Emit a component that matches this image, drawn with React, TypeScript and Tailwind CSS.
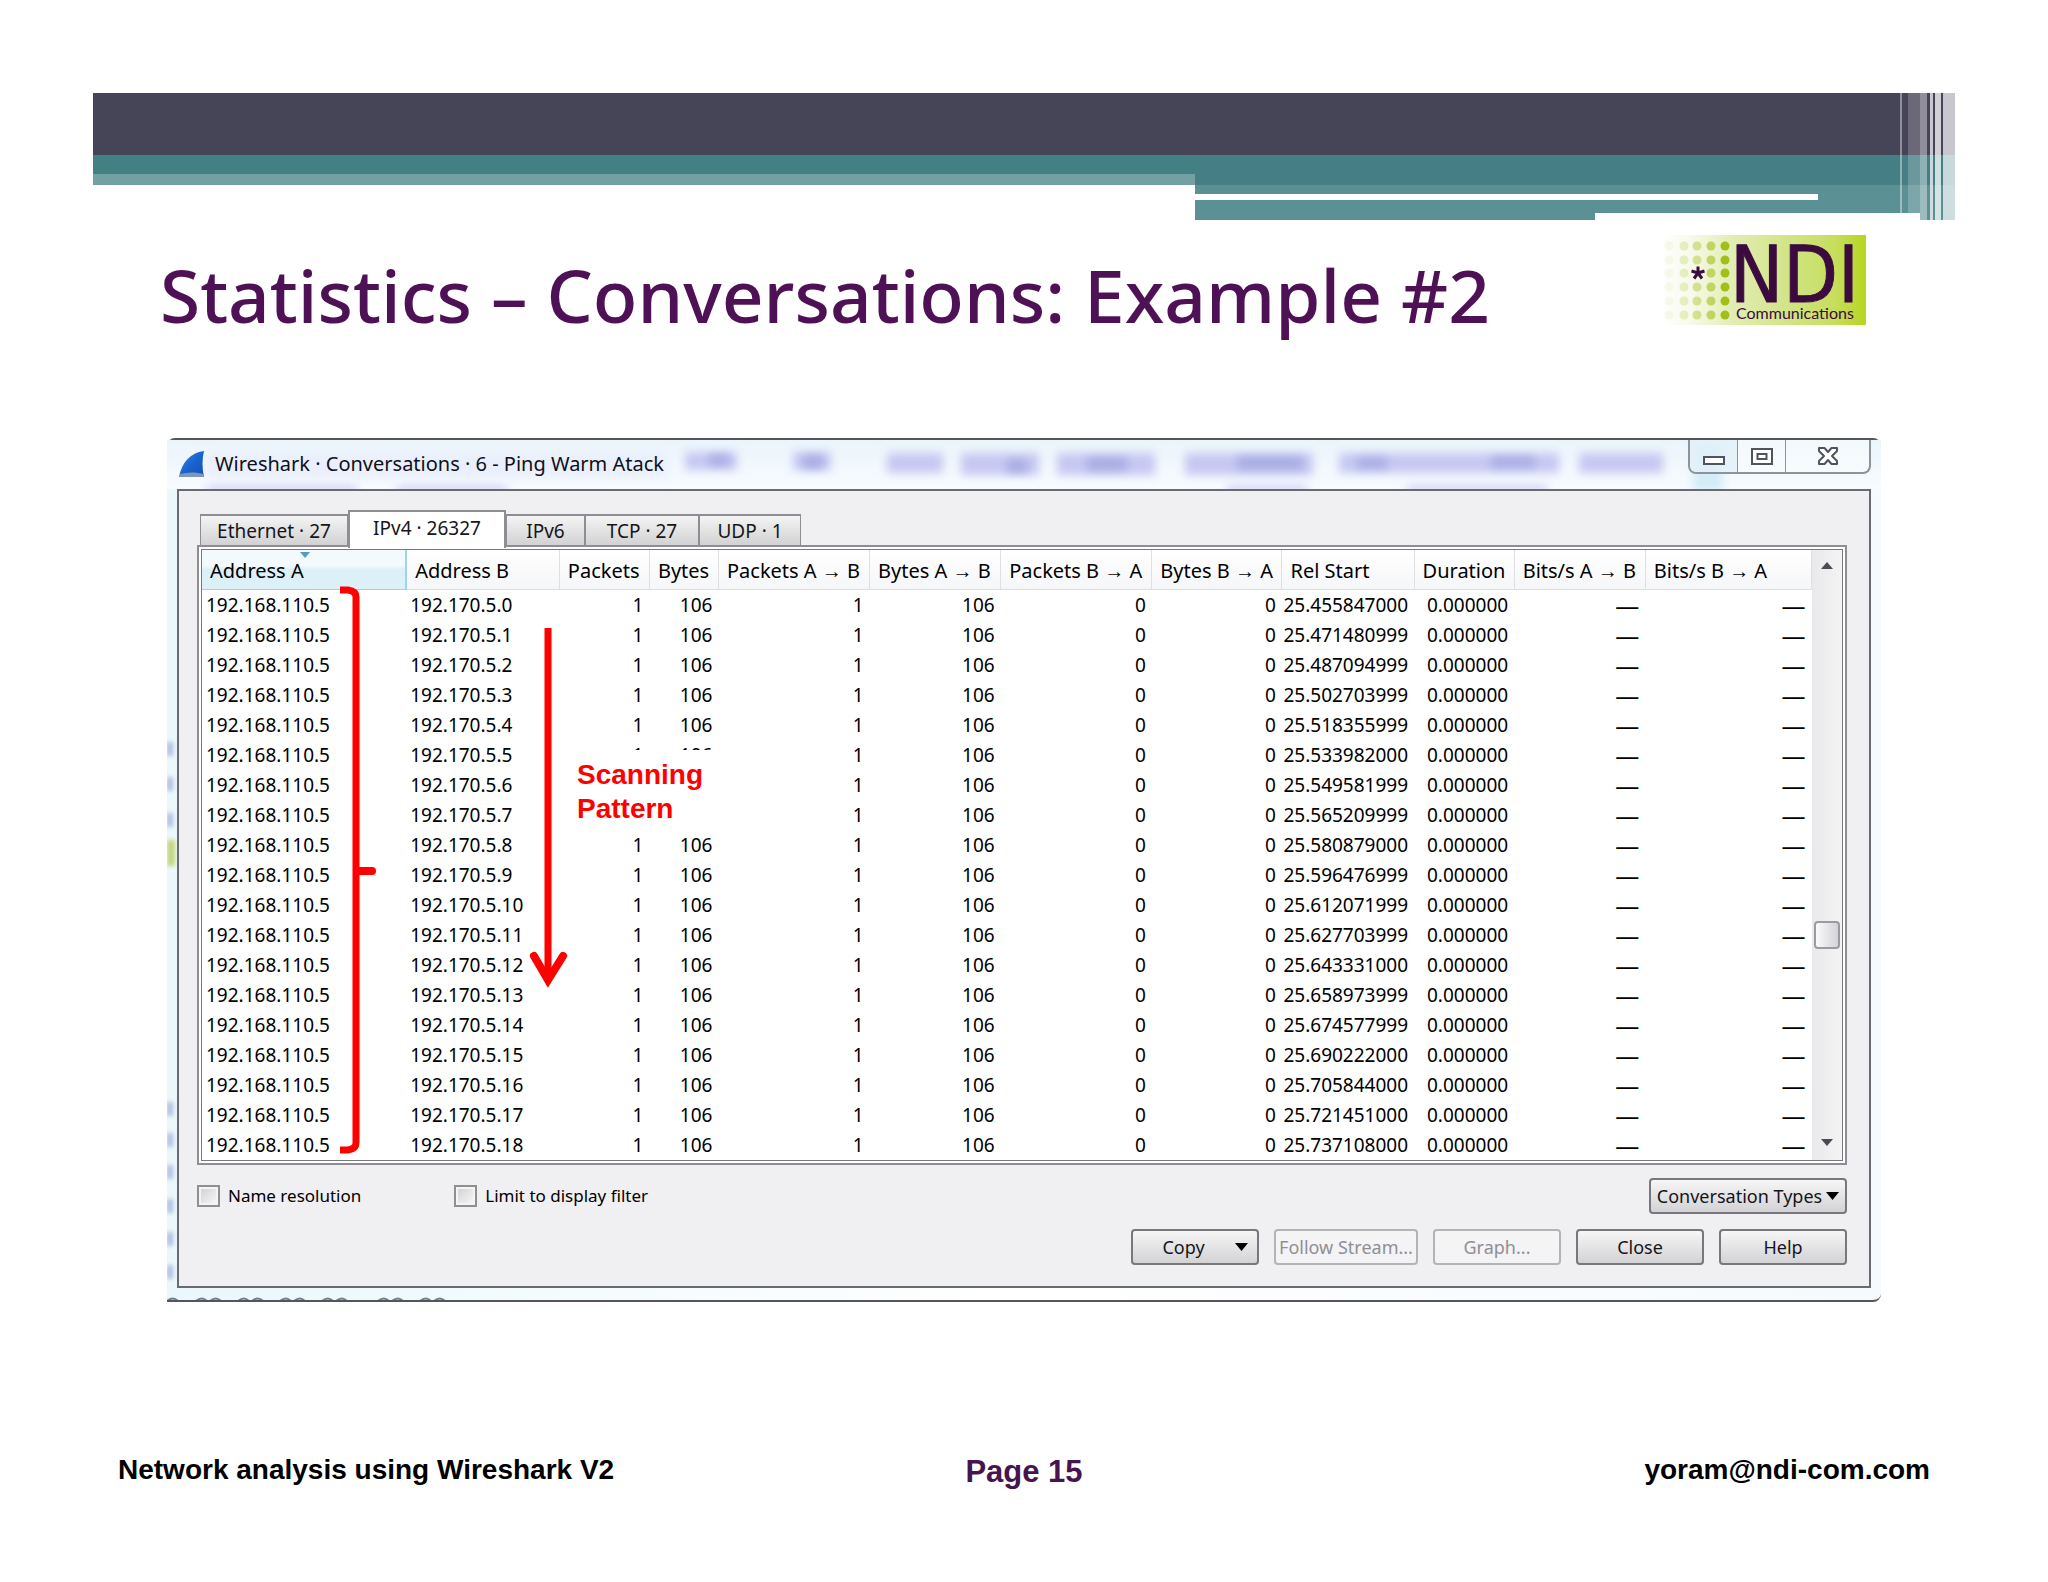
import React from "react";

interface Conversation {
  addressA: string;
  addressB: string;
  packets: string;
  bytes: string;
  relStart: string;
}

const REL_STARTS = [
  "25.455847000",
  "25.471480999",
  "25.487094999",
  "25.502703999",
  "25.518355999",
  "25.533982000",
  "25.549581999",
  "25.565209999",
  "25.580879000",
  "25.596476999",
  "25.612071999",
  "25.627703999",
  "25.643331000",
  "25.658973999",
  "25.674577999",
  "25.690222000",
  "25.705844000",
  "25.721451000",
  "25.737108000",
];

// Rows whose totals sit completely behind the "Scanning Pattern" note
const COVERED_ROWS = [6, 7];

const conversations: Conversation[] = REL_STARTS.map((relStart, i) => ({
  addressA: "192.168.110.5",
  addressB: `192.170.5.${i}`,
  packets: COVERED_ROWS.includes(i) ? "" : "1",
  bytes: COVERED_ROWS.includes(i) ? "" : "106",
  relStart,
}));

const columns = [
  { label: "Address A", width: 204 },
  { label: "Address B", width: 153 },
  { label: "Packets", width: 90 },
  { label: "Bytes", width: 69 },
  { label: "Packets A → B", width: 151 },
  { label: "Bytes A → B", width: 131 },
  { label: "Packets B → A", width: 151 },
  { label: "Bytes B → A", width: 130 },
  { label: "Rel Start", width: 132 },
  { label: "Duration", width: 100 },
  { label: "Bits/s A → B", width: 131 },
  { label: "Bits/s B → A", width: 166 },
];

const tabs = [
  { label: "Ethernet · 27", className: "w-[148px]" },
  { label: "IPv4 · 26327", className: "w-[158px]", selected: true },
  { label: "IPv6", className: "w-[79px]" },
  { label: "TCP · 27", className: "w-[114px]" },
  { label: "UDP · 1", className: "w-[102px]" },
];

const SlideHeader: React.FC = () => (
  <header className="relative mx-[93px]">
    <div className="h-[62px] bg-[#464457]"></div>
    <div className="flex">
      <div className="w-[1102px] shrink">
        <div className="h-[19px] bg-[#438084]"></div>
        <div className="h-[11px] bg-[#72a0a3]"></div>
      </div>
      <div className="flex-1">
        <div className="h-[30px] bg-[#457f85]"></div>
        <div className="h-[9px] bg-[#5b9095]"></div>
        <div className="flex h-[6px] justify-end">
          <div className="w-[137px] bg-[#5b9095]"></div>
        </div>
        <div className="h-[13px] bg-[#5b9095]"></div>
        <div className="flex h-[7px] justify-between">
          <div className="w-[400px] bg-[#5b9095]"></div>
          <div className="w-[35px] bg-[#5b9095]"></div>
        </div>
      </div>
    </div>
    <div className="absolute inset-y-0 right-0 flex">
      <div className="mr-[6px] w-[2px] bg-white/40"></div>
      <div className="w-[12px] bg-white/20"></div>
      <div className="mr-[3px] w-[7px] bg-white/40"></div>
      <div className="mr-[2px] w-[3px] bg-white/70"></div>
      <div className="mr-[2px] w-[6px] bg-white/75"></div>
      <div className="w-[12px] bg-white/70"></div>
    </div>
  </header>
);

const Logo: React.FC = () => {
  const dotColumns = [
    { x: 9, opacity: 0.08 },
    { x: 24, opacity: 0.22 },
    { x: 37, opacity: 0.4 },
    { x: 51, opacity: 0.6 },
    { x: 65, opacity: 1 },
  ];
  const dotRows = [11, 25, 38, 52, 66, 80];

  return (
    <svg
      className="h-[90px] w-[206px] shrink-0 overflow-visible"
      viewBox="0 0 206 90"
      role="img"
      aria-label="NDI Communications"
    >
      <defs>
        <linearGradient id="logo-bg" x1="0" x2="1" y1="0" y2="0">
          <stop offset="0" stopColor="#ffffff" />
          <stop offset="0.15" stopColor="#f7faea" />
          <stop offset="0.35" stopColor="#e2edb4" />
          <stop offset="0.6" stopColor="#d3e58a" />
          <stop offset="0.85" stopColor="#c6de5c" />
          <stop offset="1" stopColor="#b7d521" />
        </linearGradient>
      </defs>
      <rect width="206" height="90" fill="url(#logo-bg)" />
      {dotColumns.map((col) =>
        dotRows
          .filter((y) => !(col.x === 37 && y === 38))
          .map((y) => (
            <circle
              key={`${col.x}-${y}`}
              cx={col.x}
              cy={y}
              r="4.5"
              fill="#a3bf17"
              opacity={col.opacity}
            />
          ))
      )}
      <g stroke="#3b0a3f" strokeWidth="3">
        <path d="M38 38V31.5M38 38L44.5 36M38 38L42 43.5M38 38L34 43.5M38 38L31.5 36" />
      </g>
      <text
        x="70"
        y="67"
        fontSize="79"
        fill="#3b0a3f"
        stroke="#3b0a3f"
        fontFamily="'DejaVu Sans Condensed', 'Noto Sans', sans-serif"
      >
        NDI
      </text>
      <text
        x="76"
        y="84"
        fontSize="16"
        fill="#3b0a3f"
        fontFamily="Lato, sans-serif"
      >
        Communications
      </text>
    </svg>
  );
};

// Packet list showing through the glass title bar
const GlassBackdrop: React.FC = () => (
  <div
    aria-hidden="true"
    className="absolute inset-0 overflow-hidden bg-linear-to-b from-[#eaf5fb] to-[#f8fbff]"
  >
    <svg className="h-full w-full">
      <defs>
        <filter id="glass" x="-10%" y="-60%" width="120%" height="220%">
          <feGaussianBlur stdDeviation="5" />
        </filter>
      </defs>
      <g filter="url(#glass)" fill="#c6c8f2">
        <rect x="518" y="12" width="52" height="18" />
        <rect x="626" y="12" width="38" height="18" />
        <rect x="720" y="13" width="56" height="20" />
        <rect x="794" y="13" width="78" height="22" />
        <rect x="890" y="13" width="98" height="22" />
        <rect x="1018" y="13" width="128" height="22" />
        <rect x="1172" y="13" width="100" height="20" />
        <rect x="1268" y="13" width="124" height="20" />
        <rect x="1412" y="13" width="84" height="20" />
        <rect x="40" y="46" width="150" height="6" />
        <rect x="230" y="46" width="110" height="6" />
        <rect x="1060" y="46" width="80" height="6" />
        <rect x="1240" y="46" width="140" height="6" />
        <rect x="1526" y="2" width="30" height="50" fill="#d3ecf8" />
      </g>
      <g filter="url(#glass)" fill="#a6abe2">
        <rect x="542" y="15" width="20" height="10" />
        <rect x="636" y="16" width="20" height="12" />
        <rect x="840" y="20" width="20" height="12" />
        <rect x="920" y="18" width="40" height="12" />
        <rect x="1070" y="17" width="66" height="12" />
        <rect x="1190" y="18" width="30" height="10" />
        <rect x="1324" y="17" width="44" height="10" />
      </g>
      <g filter="url(#glass)" fill="#e9effc">
        <rect x="40" y="12" width="460" height="26" />
      </g>
    </svg>
  </div>
);

const TitleBar: React.FC = () => (
  <div className="relative flex h-[49px] items-start justify-between">
    <GlassBackdrop />
    <div className="relative flex items-center gap-[10px] pt-[8px] pl-[12px]">
      <svg className="h-[28px] w-[26px]" viewBox="0 0 26 28">
        <defs>
          <linearGradient id="fin" x1="0" x2="1" y1="0" y2="1">
            <stop offset="0" stopColor="#3f8fe2" />
            <stop offset="0.5" stopColor="#1a63d0" />
            <stop offset="1" stopColor="#0f50b8" />
          </linearGradient>
        </defs>
        <path
          d="M0 27C3 12 11 3 25 1C23 9 23 18 25 27Z"
          fill="url(#fin)"
        />
        <path d="M0 27L1 24C9 22 17 22 24 24L25 27Z" fill="#7f97b5" />
      </svg>
      <h2 className="text-[20px] leading-8 text-[#101018]">
        Wireshark · Conversations · 6 - Ping Warm Atack
      </h2>
    </div>
    <div className="relative mr-[10px] flex h-[34px] overflow-hidden rounded-b-lg border-x-2 border-b-2 border-[#8d939c] bg-white/40">
      <button
        type="button"
        aria-label="Minimize"
        className="flex w-[48px] items-center justify-center border-r border-[#8d939c] bg-[#dcedf8]/60 pt-2"
      >
        <svg className="h-[9px] w-[22px]" viewBox="0 0 22 9">
          <rect x="1" y="1" width="20" height="7" fill="#fff" stroke="#50545e" strokeWidth="2" />
        </svg>
      </button>
      <button
        type="button"
        aria-label="Maximize"
        className="flex w-[48px] items-center justify-center border-r border-[#8d939c]"
      >
        <svg className="h-[17px] w-[22px]" viewBox="0 0 22 17">
          <rect x="1" y="1" width="20" height="15" fill="#fff" stroke="#50545e" strokeWidth="2" />
          <rect x="6.5" y="6" width="9" height="5" fill="#fff" stroke="#50545e" strokeWidth="2" />
        </svg>
      </button>
      <button
        type="button"
        aria-label="Close window"
        className="flex w-[83px] items-center justify-center"
      >
        <svg className="h-[18px] w-[20px]" viewBox="0 0 20 18">
          <path
            d="M1 1H6.5L10 5L13.5 1H19V4L14 9L19 14V17H13.5L10 13L6.5 17H1V14L6 9L1 4Z"
            fill="#fff"
            stroke="#50545e"
            strokeWidth="2"
            strokeLinejoin="round"
          />
        </svg>
      </button>
    </div>
  </div>
);

const TabBar: React.FC = () => (
  <div role="tablist" className="ml-[3px] flex items-end">
    {tabs.map((tab) =>
      tab.selected ? (
        <button
          key={tab.label}
          type="button"
          role="tab"
          aria-selected="true"
          className={`relative z-10 -mb-[3px] h-[38px] border-x-2 border-t-2 border-[#8d8d93] bg-white pb-1 text-[19px] leading-6 ${tab.className}`}
        >
          {tab.label}
        </button>
      ) : (
        <button
          key={tab.label}
          type="button"
          role="tab"
          aria-selected="false"
          className={`h-[31px] border-x border-t-2 border-[#8d8d93] bg-linear-to-b from-[#f4f4f4] to-[#d2d2d4] text-[19px] leading-6 ${tab.className}`}
        >
          {tab.label}
        </button>
      )
    )}
  </div>
);

const ConversationTable: React.FC = () => (
  <table className="w-full table-fixed border-collapse text-[19px] text-black">
    <colgroup>
      {columns.map((col) => (
        <col key={col.label} style={{ width: col.width }} />
      ))}
    </colgroup>
    <thead>
      <tr className="h-[39px]">
        {columns.map((col, index) => (
          <th
            key={col.label}
            className={
              index === 0
                ? "relative border-r-2 border-b border-[#9fd3e8] bg-linear-to-b from-[#f3fafd] from-40% to-[#dcf0f8] to-50% p-0 pt-1 pl-2 text-left text-[20px] leading-6 font-normal whitespace-nowrap"
                : "border-r border-b border-[#dfdfe3] bg-linear-to-b from-white to-[#f5f6f8] p-0 pt-1 pl-2 text-left text-[20px] leading-6 font-normal whitespace-nowrap"
            }
          >
            {col.label}
            {index === 0 && (
              <svg
                className="absolute top-[2px] left-[48%] h-[6px] w-[10px]"
                viewBox="0 0 10 6"
              >
                <path d="M0 0H10L5 6Z" fill="#5b9ab8" />
              </svg>
            )}
          </th>
        ))}
      </tr>
    </thead>
    <tbody>
      {conversations.map((row) => (
        <tr key={row.addressB} className="h-[30px] text-right leading-[30px]">
          <td className="p-0 pl-1 text-left">{row.addressA}</td>
          <td className="p-0 pl-1 text-left">{row.addressB}</td>
          <td className="p-0 pr-[6px]">{row.packets}</td>
          <td className="p-0 pr-[6px]">{row.bytes}</td>
          <td className="p-0 pr-[6px]">1</td>
          <td className="p-0 pr-[6px]">106</td>
          <td className="p-0 pr-[6px]">0</td>
          <td className="p-0 pr-[6px]">0</td>
          <td className="p-0 pr-[6px]">{row.relStart}</td>
          <td className="p-0 pr-[6px]">0.000000</td>
          <td className="p-0 pr-[6px] text-[24px]">—</td>
          <td className="p-0 pr-[6px] text-[24px]">—</td>
        </tr>
      ))}
    </tbody>
  </table>
);

const ScrollBar: React.FC = () => (
  <div className="flex w-[30px] shrink-0 flex-col items-center bg-linear-to-r from-[#e9e9eb] to-[#f4f4f5] pt-[12px] pb-[14px]">
    <svg className="h-[8px] w-[12px]" viewBox="0 0 12 8">
      <path d="M0 7L6 0L12 7Z" fill="#4b4b52" />
    </svg>
    <div className="grow-[78]"></div>
    <div className="h-[28px] w-[26px] rounded-sm border-2 border-[#9a9aa0] bg-linear-to-r from-[#fafafa] to-[#d4d4d8]"></div>
    <div className="grow-[42]"></div>
    <svg className="h-[7px] w-[12px]" viewBox="0 0 12 7">
      <path d="M0 0H12L6 7Z" fill="#4b4b52" />
    </svg>
  </div>
);

const Annotations: React.FC = () => (
  <>
    <svg
      className="pointer-events-none absolute top-0 left-0 h-full w-[400px]"
      viewBox="0 0 400 609"
      preserveAspectRatio="xMinYMin"
      fill="none"
      stroke="#ff0000"
      strokeWidth="7"
    >
      <path d="M138 40H146Q154 41 154 47V593Q154 599 146 600H138" />
      <path d="M156 321H170" strokeLinecap="round" strokeWidth="8" />
      <path d="M346 78V430" />
      <path d="M332 406L346 430L361 406" strokeLinecap="round" strokeWidth="8" />
    </svg>
    <p className="absolute top-[200px] left-[361px] w-[168px] bg-white py-2 pl-[14px] font-['Liberation_Sans',Arial,sans-serif] text-[28px] leading-[34px] font-bold text-[#ff0000]">
      Scanning
      <br />
      Pattern
    </p>
  </>
);

interface DialogButtonProps {
  label: string;
  className: string;
  menu?: boolean;
  disabled?: boolean;
}

const DialogButton: React.FC<DialogButtonProps> = ({
  label,
  className,
  menu,
  disabled,
}) => (
  <button
    type="button"
    disabled={disabled}
    className={`flex h-[36px] items-center justify-center rounded-sm border-2 border-[#77777d] bg-linear-to-b from-[#f6f6f6] to-[#d3d3d6] text-[18px] leading-6 whitespace-nowrap disabled:border-[#b4b4b8] disabled:from-[#f6f5f6] disabled:to-[#f3f2f4] disabled:text-[#8f8f94] ${className}`}
  >
    {label}
    {menu && (
      <svg className="h-[8px] w-[13px] shrink-0" viewBox="0 0 13 8">
        <path d="M0 0H13L6.5 8Z" fill="#000" />
      </svg>
    )}
  </button>
);

const CheckOption: React.FC<{ id: string; label: string }> = ({
  id,
  label,
}) => (
  <div className="flex items-center gap-2">
    <input
      id={id}
      type="checkbox"
      className="h-[22px] w-[23px] appearance-none border-2 border-[#8e8f8f] bg-linear-to-br from-[#cfcfd2] to-[#fafafa] shadow-[inset_0_0_0_2px_#f4f4f4]"
    />
    <label htmlFor={id} className="text-[17px] leading-6 text-black">
      {label}
    </label>
  </div>
);

const EdgeSpots: React.FC = () => (
  <svg
    aria-hidden="true"
    className="absolute inset-y-0 left-0 h-full w-[300px]"
  >
    <defs>
      <filter id="edge" x="-50%" y="-50%" width="200%" height="200%">
        <feGaussianBlur stdDeviation="2" />
      </filter>
    </defs>
    <g filter="url(#edge)" fill="#aebde0">
      {[309, 344, 380, 669, 700, 732, 766, 799, 832].map((y) => (
        <rect key={y} x="0" y={y - 7} width="6" height="14" />
      ))}
      <rect x="0" y="400" width="8" height="26" fill="#c3d67a" />
    </g>
    <g fill="none" stroke="#6f7f8c" strokeWidth="2">
      {[-14, 29, 71, 113, 155, 211, 253].map((x) => (
        <path
          key={x}
          d={`M${x} 861Q${x + 6} 856 ${x + 11} 861M${x + 14} 861Q${x + 20} 856 ${x + 25} 861`}
        />
      ))}
    </g>
  </svg>
);

const ConversationsWindow: React.FC = () => (
  <section className="relative mx-[167px] rounded-t-lg rounded-br-lg border-t-2 border-b-2 border-[#55555c] bg-linear-to-r from-[#eaf8fb] via-white to-[#f4fafd] font-['Noto_Sans','Open_Sans',sans-serif] text-[#15151a]">
    <TitleBar />
    <EdgeSpots />
    <div className="relative mx-[10px] mb-[12px] border-2 border-[#6a6a72] bg-[#f0eff1] pt-[19px] pr-[22px] pb-[21px] pl-[18px]">
      <TabBar />
      <div className="border-2 border-[#8d8d93] bg-white p-[2px]">
        <div className="relative flex border border-[#77777d] bg-white">
          <div className="min-w-0 flex-1">
            <ConversationTable />
          </div>
          <ScrollBar />
          <Annotations />
        </div>
      </div>
      <div className="mt-[13px] flex items-center justify-between">
        <div className="flex gap-[93px]">
          <CheckOption id="name-resolution" label="Name resolution" />
          <CheckOption id="display-filter" label="Limit to display filter" />
        </div>
        <DialogButton label="Conversation Types" className="w-[198px] gap-1" menu />
      </div>
      <div className="mt-[15px] flex justify-end gap-[15px]">
        <DialogButton label="Copy" className="w-[128px] gap-[30px] pl-5" menu />
        <DialogButton label="Follow Stream..." className="w-[144px]" disabled />
        <DialogButton label="Graph..." className="w-[128px]" disabled />
        <DialogButton label="Close" className="w-[128px]" />
        <DialogButton label="Help" className="w-[128px]" />
      </div>
    </div>
  </section>
);

export default function App() {
  return (
    <main className="min-h-screen bg-white pt-[93px] pb-20">
      <SlideHeader />
      <div className="mt-[15px] flex items-start justify-between pr-[182px] pl-[160px]">
        <h1 className="pt-[10px] font-['Comic_Sans_MS','Noto_Sans',sans-serif] text-[73px] leading-[100px] font-medium whitespace-nowrap text-[#4f1155]">
          Statistics – Conversations: Example #2
        </h1>
        <Logo />
      </div>
      <div className="mt-[93px]">
        <ConversationsWindow />
      </div>
      <footer className="mt-[146px] grid grid-cols-3 items-center px-[118px] font-['Liberation_Sans',Arial,sans-serif] text-[28px] leading-10 font-bold text-black">
        <span>Network analysis using Wireshark V2</span>
        <span className="pt-1 text-center text-[31px] text-[#47144e]">Page 15</span>
        <a href="mailto:yoram@ndi-com.com" className="text-right">
          yoram@ndi-com.com
        </a>
      </footer>
    </main>
  );
}
